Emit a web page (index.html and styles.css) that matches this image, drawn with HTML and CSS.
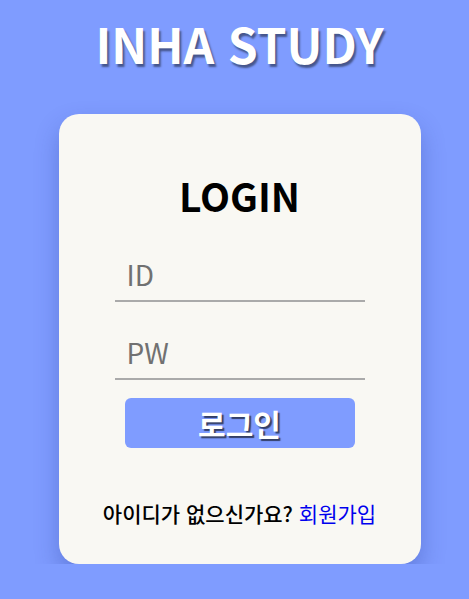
FILE: index.html
```html
<!DOCTYPE html>
<html lang="ko">

<head>
  <meta charset="UTF-8">
  <meta name="viewport" content="width=device-width, initial-scale=1.0">
  <title>INHA STUDY</title>
  <link rel="stylesheet" href="styles.css">
</head>

<body>
  <h1 class="title">INHA STUDY</h1>
  <div class="card">
    <h2 class="login">LOGIN</h2>
    <form class="form">
      <input class="field" type="text" placeholder="ID">
      <input class="field" type="password" placeholder="PW">
      <button class="btn" type="button">로그인</button>
    </form>
    <p class="join">아이디가 없으신가요? <a href="#">회원가입</a></p>
  </div>
</body>

</html>
```

FILE: styles.css
```css
body {
  margin: 0;
  padding-left: 10px;
  background: #7f9cff;
  font-family: "Noto Sans CJK KR", "Noto Sans", sans-serif;
  display: flex;
  flex-direction: column;
  align-items: center;
}

.title {
  margin: 12px 0 0;
  height: 102px;
  font-size: 48px;
  line-height: 62px;
  color: #fff;
  text-shadow: 2px 3px 2px rgba(0, 0, 0, 0.45);
}

.card {
  width: 362px;
  height: 450px;
  box-sizing: border-box;
  background: #f9f8f3;
  border-radius: 20px;
  box-shadow: 0 12px 24px rgba(30, 50, 140, 0.3);
  display: flex;
  flex-direction: column;
  align-items: center;
  padding-top: 55px;
}

.login {
  margin: 0;
  font-size: 39px;
  line-height: 52px;
  color: #000;
}

.form {
  display: flex;
  flex-direction: column;
  align-items: center;
  margin-top: 23px;
}

.field {
  width: 250px;
  height: 58px;
  box-sizing: border-box;
  border: none;
  border-bottom: 2px solid #aaa;
  background: transparent;
  padding: 4px 12px 0;
  margin-bottom: 20px;
  font-family: inherit;
  font-size: 28px;
  outline: none;
}

.field::placeholder {
  color: #717171;
}

.btn {
  width: 230px;
  height: 50px;
  border: none;
  border-radius: 6px;
  background: #7f9cff;
  color: #fff;
  font-family: inherit;
  font-size: 30px;
  line-height: 50px;
  font-weight: bold;
  text-shadow: 2px 2px 1px rgba(0, 0, 0, 0.6);
  margin-top: -2px;
  padding: 0;
}

.join {
  margin: 50px 0 0;
  font-size: 21px;
  font-weight: 500;
  color: #000;
}

.join a {
  color: #0000ee;
  text-decoration: none;
  font-weight: 400;
}
```
